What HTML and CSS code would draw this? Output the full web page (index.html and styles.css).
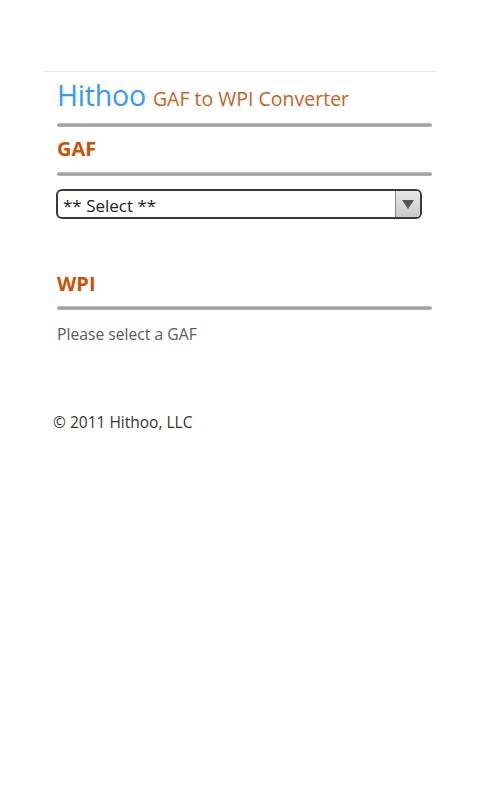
FILE: index.html
```html
<!DOCTYPE html>
<html>
<head>
<meta charset="utf-8">
<link rel="stylesheet" href="styles.css">
</head>
<body>
<div class="page">
  <div class="content">
    <h1 class="title"><span class="brand">Hithoo</span> <span class="sub">GAF to WPI Converter</span></h1>
    <div class="rule"></div>
    <h2 class="section">GAF</h2>
    <div class="rule"></div>
    <div class="select">
      <span class="select-text">** Select **</span>
      <span class="select-btn"><span class="tri"></span></span>
    </div>
    <h2 class="section wpi">WPI</h2>
    <div class="rule"></div>
    <p class="hint">Please select a GAF</p>
  </div>
  <p class="copy">© 2011 Hithoo, LLC</p>
</div>
</body>
</html>
```
FILE: styles.css
```css
html, body {
  margin: 0;
  padding: 0;
  background: #ffffff;
}
body {
  font-family: "Open Sans", "DejaVu Sans", sans-serif;
}
.page {
  margin: 71px 44px 0 44px;
  border-top: 1px solid #e6e6e6;
}
.content {
  padding: 0 4px 0 13px;
}
.title {
  margin: 0;
  height: 51px;
  display: flex;
  align-items: baseline;
  padding-top: 5px;
  box-sizing: border-box;
  font-weight: normal;
  line-height: 36px;
  white-space: nowrap;
}
.brand {
  color: #3399ff;
  font-size: 28.5px;
  letter-spacing: -0.2px;
}
.sub {
  color: #cc5f22;
  font-size: 19.5px;
  margin-left: 7px;
}
.rule {
  height: 4px;
  border-radius: 2px;
  background: linear-gradient(#c4c4c4, #9a9a9a 50%, #b8b8b8);
}
.section {
  margin: 0;
  height: 45px;
  box-sizing: border-box;
  padding-top: 9px;
  font-size: 20px;
  line-height: 26px;
  font-weight: bold;
  color: #cc5200;
}
.section.wpi {
  margin-top: 47px;
  height: 40px;
  padding-top: 5px;
}
.select {
  margin: 13px 0 0 -1px;
  width: 366px;
  height: 30px;
  box-sizing: border-box;
  border: 2px solid #3a3a3a;
  border-radius: 6px;
  display: flex;
  align-items: center;
  background: #ffffff;
  overflow: hidden;
}
.select-text {
  flex: 1;
  padding: 3px 0 0 5px;
  font-size: 17px;
  color: #222;
  line-height: 23px;
}
.select-btn {
  width: 24px;
  height: 100%;
  border-left: 1px solid #8a8a8a;
  background: linear-gradient(#e6e6e6, #cacaca);
  display: flex;
  align-items: center;
  justify-content: center;
}
.tri {
  width: 0;
  height: 0;
  border-left: 6px solid transparent;
  border-right: 6px solid transparent;
  border-top: 9px solid #555;
}
.hint {
  margin: 14px 0 0 0;
  font-size: 15.7px;
  line-height: 20px;
  color: #5a5a5a;
}
.copy {
  margin: 68px 0 0 9px;
  font-size: 15.5px;
  line-height: 20px;
  color: #333;
}
```
